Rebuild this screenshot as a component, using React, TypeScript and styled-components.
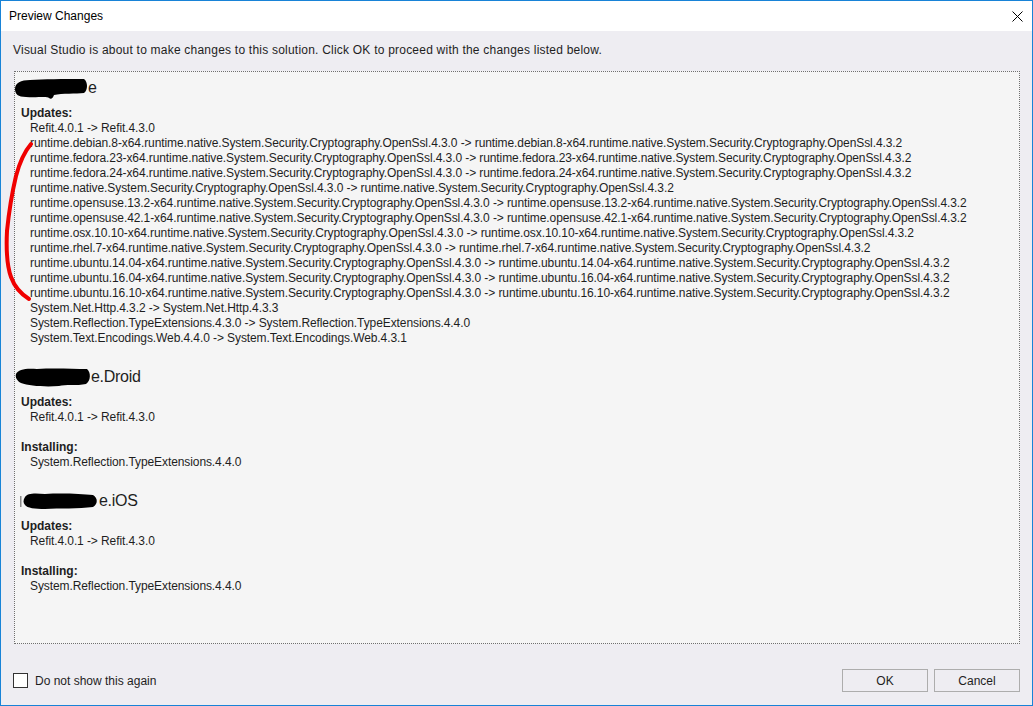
import React from 'react';
import styled, { createGlobalStyle } from 'styled-components';

const GlobalStyle = createGlobalStyle`
  html, body {
    margin: 0;
    padding: 0;
    background: #ffffff;
  }
  body {
    font-family: "Segoe UI", "Liberation Sans", Arial, sans-serif;
    font-size: 12px;
    color: #1e1e1e;
  }
`;

const Window = styled.div`
  position: relative;
  width: 1033px;
  height: 706px;
  box-sizing: border-box;
  border: 1px solid #1883d7;
  background: #eeedf2;
  display: flex;
  flex-direction: column;
  overflow: hidden;
`;

const TitleBar = styled.div`
  height: 30px;
  flex: none;
  background: #ffffff;
  display: flex;
  align-items: center;
  justify-content: space-between;
  padding: 0 5px 0 8px;
`;

const Title = styled.span`
  font-size: 12px;
  color: #000000;
`;

const CloseButton = styled.button`
  width: 20px;
  height: 20px;
  border: none;
  background: transparent;
  padding: 0;
  display: flex;
  align-items: center;
  justify-content: center;
`;

const Body = styled.div`
  flex: 1;
  display: flex;
  flex-direction: column;
  padding: 0 12px 0 13px;
  min-height: 0;
`;

const Message = styled.p`
  margin: 11px 0 13px -1px;
  line-height: 16px;
  height: 16px;
  letter-spacing: 0.22px;
`;

const Panel = styled.div`
  flex: 1;
  min-height: 0;
  overflow: hidden;
  background: #f5f5f5;
  border: 1px dotted #6f6f6f;
  padding: 6px 0 0 2px;
`;

const Project = styled.section`
  & + & {
    margin-top: 21px;
  }
`;

const ProjectName = styled.h2`
  margin: 0 0 8px 0;
  font-size: 16px;
  font-weight: normal;
  line-height: 20px;
  height: 20px;
  letter-spacing: -0.3px;
  display: flex;
  align-items: center;
`;

const Group = styled.div`
  & + & {
    margin-top: 15px;
  }
`;

const GroupLabel = styled.div`
  font-weight: bold;
  line-height: 15px;
  padding-left: 4px;
`;

const Item = styled.div`
  line-height: 15px;
  padding-left: 13px;
  white-space: nowrap;
  letter-spacing: -0.09px;
`;

const Footer = styled.div`
  height: 61px;
  flex: none;
  box-sizing: border-box;
  padding: 25px 12px 13px 12px;
  display: flex;
  align-items: center;
  justify-content: space-between;
`;

const CheckRow = styled.label`
  display: flex;
  align-items: center;
  gap: 7px;
`;

const CheckBox = styled.span`
  width: 15px;
  height: 15px;
  box-sizing: border-box;
  border: 1px solid #333333;
  background: #ffffff;
`;

const Buttons = styled.div`
  display: flex;
  gap: 6px;
`;

const DialogButton = styled.button`
  width: 86px;
  height: 23px;
  box-sizing: border-box;
  border: 1px solid #adadad;
  background: #eeedf2;
  font-family: inherit;
  font-size: 12px;
  color: #1e1e1e;
  padding: 0;
`;

const Annotation = styled.svg`
  position: absolute;
  left: 0;
  top: 0;
  pointer-events: none;
`;

// redaction scribbles over the project names
const blobs: Record<string, { w: number; ml: number; d: string; mark?: boolean }> = {
  core: {
    w: 74,
    ml: -3,
    d: 'M1 11 C1 5 7 2 16 2 C30 1 48 1 70 1 C74 4 74 12 70 15 C62 16 48 15 40 17 C39 20 37 22 35 20 C33 18 22 20 12 19 C4 19 1 16 1 11 Z',
  },
  droid: {
    w: 76,
    ml: -2,
    d: 'M1 7 C3 2 12 1 22 2 C40 1 58 2 72 2 C76 5 76 14 71 17 C62 19 50 17 44 19 C30 20 14 19 6 16 C2 14 0 10 1 7 Z',
  },
  ios: {
    w: 80,
    ml: 2,
    mark: true,
    d: 'M6 6 C8 2 16 2 26 3 C44 2 62 3 74 4 C79 7 79 13 74 16 C60 18 40 17 26 18 C16 18 8 17 6 14 C4 12 4 9 6 6 Z',
  },
};

type GroupData = { label: string; items: string[] };
type ProjectData = { blob: string; suffix: string; groups: GroupData[] };

const crypto = 'runtime.native.System.Security.Cryptography.OpenSsl';
const rid = (p: string) => `runtime.${p}-x64.${crypto}.4.3.0 -> runtime.${p}-x64.${crypto}.4.3.2`;

const projects: ProjectData[] = [
  {
    blob: 'core',
    suffix: 'e',
    groups: [
      {
        label: 'Updates:',
        items: [
          'Refit.4.0.1 -> Refit.4.3.0',
          rid('debian.8'),
          rid('fedora.23'),
          rid('fedora.24'),
          `${crypto}.4.3.0 -> ${crypto}.4.3.2`,
          rid('opensuse.13.2'),
          rid('opensuse.42.1'),
          rid('osx.10.10'),
          rid('rhel.7'),
          rid('ubuntu.14.04'),
          rid('ubuntu.16.04'),
          rid('ubuntu.16.10'),
          'System.Net.Http.4.3.2 -> System.Net.Http.4.3.3',
          'System.Reflection.TypeExtensions.4.3.0 -> System.Reflection.TypeExtensions.4.4.0',
          'System.Text.Encodings.Web.4.4.0 -> System.Text.Encodings.Web.4.3.1',
        ],
      },
    ],
  },
  {
    blob: 'droid',
    suffix: 'e.Droid',
    groups: [
      { label: 'Updates:', items: ['Refit.4.0.1 -> Refit.4.3.0'] },
      { label: 'Installing:', items: ['System.Reflection.TypeExtensions.4.4.0'] },
    ],
  },
  {
    blob: 'ios',
    suffix: 'e.iOS',
    groups: [
      { label: 'Updates:', items: ['Refit.4.0.1 -> Refit.4.3.0'] },
      { label: 'Installing:', items: ['System.Reflection.TypeExtensions.4.4.0'] },
    ],
  },
];

function Redaction({ kind }: { kind: string }) {
  const b = blobs[kind];
  return (
    <svg width={b.w} height={21} viewBox={`0 0 ${b.w} 21`} style={{ marginLeft: b.ml }}>
      {b.mark && <rect x="1" y="5" width="1.5" height="11" fill="#8a8a8a" />}
      <path d={b.d} fill="#000" />
    </svg>
  );
}

export default function App() {
  return (
    <>
      <GlobalStyle />
      <Window>
        <TitleBar>
          <Title>Preview Changes</Title>
          <CloseButton aria-label="Close">
            <svg width="11" height="11" viewBox="0 0 11 11">
              <path d="M0.5 0.5 L10.5 10.5 M10.5 0.5 L0.5 10.5" stroke="#000" strokeWidth="1" fill="none" />
            </svg>
          </CloseButton>
        </TitleBar>
        <Body>
          <Message>
            Visual Studio is about to make changes to this solution. Click OK to proceed with the changes listed below.
          </Message>
          <Panel>
            {projects.map((p) => (
              <Project key={p.suffix}>
                <ProjectName>
                  <Redaction kind={p.blob} />
                  <span>{p.suffix}</span>
                </ProjectName>
                {p.groups.map((g) => (
                  <Group key={g.label}>
                    <GroupLabel>{g.label}</GroupLabel>
                    {g.items.map((it) => (
                      <Item key={it}>{it}</Item>
                    ))}
                  </Group>
                ))}
              </Project>
            ))}
          </Panel>
        </Body>
        <Footer>
          <CheckRow>
            <CheckBox />
            <span>Do not show this again</span>
          </CheckRow>
          <Buttons>
            <DialogButton>OK</DialogButton>
            <DialogButton>Cancel</DialogButton>
          </Buttons>
        </Footer>
        <Annotation width="40" height="310" viewBox="0 0 40 310">
          <path
            d="M30 143 C24 150 19 160 15 175 C11 192 8 210 6 230 C5 250 6 265 10 276 C14 287 20 293 28 298"
            stroke="#f00000"
            strokeWidth="4"
            strokeLinecap="round"
            fill="none"
          />
        </Annotation>
      </Window>
    </>
  );
}
